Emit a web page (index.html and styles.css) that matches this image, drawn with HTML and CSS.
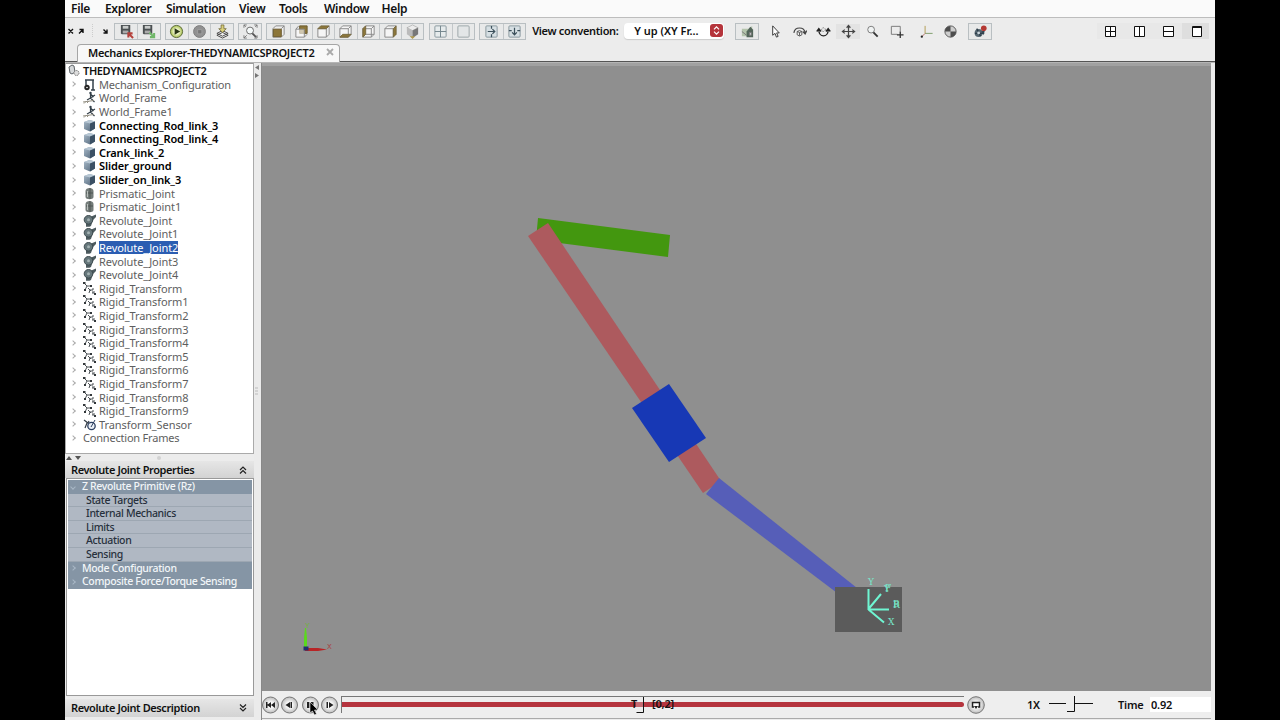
FILE: index.html
```html
<!DOCTYPE html>
<html lang="en">
<head>
  <meta charset="UTF-8" />
  <meta name="viewport" content="width=device-width, initial-scale=1" />
  <title>Mechanics Explorer-THEDYNAMICSPROJECT2</title>
  <link rel="stylesheet" href="styles.css">
</head>
<body>

<!-- Icon set -->
<svg class="sprite" width="0" height="0">
  <defs>
    <linearGradient id="steel" x2="1" y2="1"><stop stop-color="#a9bac9"/><stop offset="1" stop-color="#4b6074"/></linearGradient>
    <radialGradient id="knob"><stop offset=".3" stop-color="#fff"/><stop offset="1" stop-color="#bcbcbc"/></radialGradient>
    <radialGradient id="lime"><stop offset=".3" stop-color="#fbffe0"/><stop offset="1" stop-color="#a5bd4c"/></radialGradient>
  </defs>
  <symbol id="i-save" viewBox="0 0 16 16"><path d="M2 1h10v10H3L2 10z" fill="#4b5052"/><path d="M4 2h6v3H4z" fill="#c9cccb"/><path d="M4 7h6v3H4z" fill="#aaa"/><path d="M15 15l-5-5m0 4.500V10h4.500" stroke="#b5413c" stroke-width="2.200" fill="none"/></symbol>
  <symbol id="i-save2" viewBox="0 0 16 16"><path d="M2 1h10v10H3L2 10z" fill="#4b5052"/><path d="M4 2h6v3H4z" fill="#c9cccb"/><path d="M4 7h6v3H4z" fill="#aaa"/><path d="M9 9l5 5m0-4.500V14H9.500" stroke="#6fb768" stroke-width="2.200" fill="none"/></symbol>
  <symbol id="i-play" viewBox="0 0 16 16"><circle cx="8" cy="8" r="6.5" fill="url(#lime)" stroke="#59683a"/><path d="M6 4.5l6 3.5-6 3.5z" fill="#273414"/></symbol>
  <symbol id="i-stop" viewBox="0 0 16 16"><circle cx="8" cy="8" r="6.3" fill="#919191" stroke="#7d7d7d"/><path d="M6 6h4.500v4.500H6z" fill="#777" stroke="#aaa" stroke-width=".7"/></symbol>
  <symbol id="i-layers" viewBox="0 0 16 16"><path d="M2 12l6-3 6 3-6 3zM2 10l6-3 6 3-6 3z" fill="#eee" stroke="#444"/><path d="M6.500 1h3v4H12L8 9 4 5h2.500z" fill="#d9cf7b" stroke="#6d6531" stroke-width=".8"/></symbol>
  <symbol id="i-fit" viewBox="0 0 16 16"><path d="M1 4V1h3M12 1h3v3M1 12v3h3M15 12v3h-3M1 1l2 2M15 1l-2 2M1 15l3-3" stroke="#777" fill="none"/><circle cx="7.500" cy="7" r="3.700" fill="#f5fafa" stroke="#666"/><path d="M10 10l4 4" stroke="#555" stroke-width="2"/></symbol>
  <symbol id="i-front" viewBox="0 0 16 16"><path d="M2 5l3-3h9v9l-3 3H2zM11 5l3-3" fill="#eee" stroke="#888"/><path d="M2.500 5.500h8.500v8H2.500z" fill="#8c7639" stroke="#6b5a2c"/></symbol>
  <symbol id="i-back" viewBox="0 0 16 16"><path d="M6 2h8v8H6z" fill="#8c7639" stroke="#6b5a2c"/><path d="M2 5.500h9V14H2zM2 5.500L5 2M11 14l3-3" fill="#fff" fill-opacity=".6" stroke="#888"/></symbol>
  <symbol id="i-top" viewBox="0 0 16 16"><path d="M2 5h9v9H2zM11 14l3-3V2" fill="#f5f5f5" stroke="#888"/><path d="M2 5l3-3h9l-3 3z" fill="#8c7639" stroke="#75673f"/></symbol>
  <symbol id="i-bottom" viewBox="0 0 16 16"><path d="M2 5l3-3h9v9l-3 3H2zM2 5h9v9M11 5l3-3" fill="#f5f5f5" stroke="#888"/><path d="M2 14l3-3h9l-3 3z" fill="#8c7639" stroke="#75673f"/></symbol>
  <symbol id="i-left" viewBox="0 0 16 16"><path d="M5 2h9v9l-3 3H2V5zM2 5h9v9M11 5l3-3M5 11h9" fill="#f5f5f5" stroke="#888"/><path d="M2 5l3-3v9l-3 3z" fill="#8c7639" stroke="#75673f"/></symbol>
  <symbol id="i-right" viewBox="0 0 16 16"><path d="M2 5l3-3h9M2 5h9v9H2z" fill="#f5f5f5" stroke="#888"/><path d="M11 5l3-3v9l-3 3z" fill="#8c7639" stroke="#75673f"/></symbol>
  <symbol id="i-iso" viewBox="0 0 16 16"><path d="M8 1l6 3-6 3-6-3z" fill="#ececec" stroke="#999" stroke-width=".6"/><path d="M2 4l6 3v8l-6-4z" fill="#bbb"/><path d="M14 4L8 7v8l6-4z" fill="#787878"/><path d="M5 13l3 3 3-3z" fill="#b19a4c"/></symbol>
  <symbol id="i-four" viewBox="0 0 16 16"><rect x="2" y="2" width="12" height="12" rx="1" fill="#e6ebec" stroke="#87969d"/><path d="M8 2v12M2 8h12" stroke="#71838b"/></symbol>
  <symbol id="i-single" viewBox="0 0 16 16"><rect x="2" y="2" width="12" height="12" rx="1" fill="#e3e6e7" stroke="#9aa4a8"/></symbol>
  <symbol id="i-splitr" viewBox="0 0 16 16"><rect x="2" y="2" width="12" height="12" rx="1" fill="#d6dfe3" stroke="#87969d"/><path d="M8 2v3M8 11v3M4 8h7M9 5.500L11.500 8 9 10.500" stroke="#3c505b" stroke-width="1.300" fill="none"/></symbol>
  <symbol id="i-splitd" viewBox="0 0 16 16"><rect x="2" y="2" width="12" height="12" rx="1" fill="#d6dfe3" stroke="#87969d"/><path d="M2 7h3M11 7h3M8 4v7M5.500 9L8 11.500 10.500 9" stroke="#3c505b" stroke-width="1.300" fill="none"/></symbol>
  <symbol id="i-scene" viewBox="0 0 16 16"><path d="M2 5h7l4-3v11H2z" fill="#b4c4ac"/><path d="M7 8l4-5 3 3v8H7z" fill="#53665a"/><path d="M2 8l5 4M10 9h2v3h-2z" stroke="#777" fill="#d6dada"/></symbol>
  <symbol id="i-arrow" viewBox="0 0 16 16"><path d="M5 2v10l2.500-2 1.500 4 1.800-.8L9.200 9.500H12z" fill="#fff" stroke="#333"/></symbol>
  <symbol id="i-rotate" viewBox="0 0 16 16"><path d="M2 9.500C3 2.500 13 2.500 14 9.500M11.500 8l2.500 2.500L15.700 7" fill="none" stroke="#444" stroke-width="1.300"/><path d="M5.500 8L8 7l2.500 1v3.500L8 12.800l-2.500-1.300zM5.500 8L8 9l2.500-1M8 9v3.500" fill="none" stroke="#555"/></symbol>
  <symbol id="i-roll" viewBox="0 0 16 16"><path d="M3 6c0 9 10 9 10 0M.8 8L3 5l2.400 3M10.600 8L13 5l2.200 3" fill="none" stroke="#222" stroke-width="1.400"/><circle cx="8" cy="6" r="2" fill="none" stroke="#777" stroke-dasharray="1.500 1"/></symbol>
  <symbol id="i-pan" viewBox="0 0 16 16"><path d="M8 2v12M2 8h12M6 4l2-2.500L10 4M6 12l2 2.500 2-2.500M4 6L1.500 8 4 10M12 6l2.500 2-2.500 2" fill="none" stroke="#444" stroke-width="1.300"/></symbol>
  <symbol id="i-zoom" viewBox="0 0 16 16"><circle cx="6.500" cy="6" r="3.600" fill="#f0f3f3" stroke="#777"/><path d="M9 9l4.500 4.500" stroke="#333" stroke-width="2"/></symbol>
  <symbol id="i-region" viewBox="0 0 16 16"><path d="M9 11H2.500V2.500H12V8" fill="none" stroke="#777"/><path d="M12 8v7M8.500 11.500h7" stroke="#333" stroke-width="1.400"/></symbol>
  <symbol id="i-axes" viewBox="0 0 16 16"><path d="M6.500 2v8" stroke="#b09a50"/><path d="M6.500 10h8" stroke="#7b9c68"/><path d="M6.500 10L3 13.500" stroke="#b86b62"/><circle cx="3" cy="13.500" r="1.200" fill="#222"/></symbol>
  <symbol id="i-ball" viewBox="0 0 16 16"><circle cx="8" cy="8" r="6" fill="#cdcdcd" stroke="#555"/><path d="M8 8V2a6 6 0 0 0-6 6zM8 8v6a6 6 0 0 0 6-6z" fill="#4d4d4d"/></symbol>
  <symbol id="i-camera" viewBox="0 0 16 16"><circle cx="6" cy="9.500" r="4.300" fill="#54656f"/><path d="M2 10h10M4 5l4 8" stroke="#2d3d49" stroke-width="1.500"/><circle cx="6" cy="9.500" r="1.500" fill="#cdd7dd"/><path d="M9 8l4-2-2 6z" fill="#344552"/><circle cx="11.500" cy="4.500" r="3" fill="#b43832"/></symbol>

  <symbol id="t-root" viewBox="0 0 13 13"><path d="M2 3l3-2 2 1 1 6-3 2-2-1z" fill="#d5d8da" stroke="#5e6367"/><circle cx="9.500" cy="9" r="2.500" fill="#ddd" stroke="#777" stroke-dasharray="1.500 .7"/></symbol>
  <symbol id="t-config" viewBox="0 0 13 13"><path d="M3 7V2h7v6M2 2h9M8 12h4M10 7v5" stroke="#35414b" stroke-width="1.500" fill="none"/><circle cx="4" cy="9.500" r="2.700" fill="#222"/><circle cx="4" cy="9.500" r=".8" fill="#fff"/></symbol>
  <symbol id="t-world" viewBox="0 0 13 13"><path d="M7.500 1v6L12 4M7.500 7l4 4M7.500 7L4 9M7.500 3l3 3" stroke="#34404a" stroke-width="1.200" fill="none"/><path d="M0 11l11-1.500M1 12.500l2-2M4 12l2-2" stroke="#938f82"/><circle cx="7.500" cy="2" r="1.200" fill="#34404a"/></symbol>
  <symbol id="t-body" viewBox="0 0 13 13"><path d="M1 3l5.500-2L12 2.500v7L7 12.500 1 10z" fill="url(#steel)"/><path d="M1 3l6 1.500 5-2L6.500 1z" fill="#b7c7d4"/><path d="M7 4.500l5-2v7l-5 3z" fill="#3b5064"/></symbol>
  <symbol id="t-prismatic" viewBox="0 0 13 13"><path d="M2.500 4c0-4 8-4 8 0v6c0 3-8 3-8 0z" fill="#737b79"/><path d="M7 1v11M3 6h7" stroke="#4e5755"/><path d="M4.500 4v6" stroke="#b9bfbc"/></symbol>
  <symbol id="t-revolute" viewBox="0 0 13 13"><path d="M7 3l6-2.500V3l-3 3-2 6-1.500.8H3V9z" fill="#4d5b5f"/><circle cx="5.500" cy="5.800" r="4.300" fill="#66777b" stroke="#3c4a4e"/><circle cx="5.500" cy="5.800" r="1.500" fill="#a3b2b3"/></symbol>
  <symbol id="t-rigid" viewBox="0 0 13 13"><path d="M1 1l3 3h4M4 4l-2 4M7 8h3V6M7 8l-1 3M9 10h3M5 6l3 3M10 10v2" stroke="#4a5054" fill="none"/><path d="M0 0h2.500v2H0zM7 3h2v2H7zM1 7h2v2H1zM11 11h2v2h-2z" fill="#33383b"/></symbol>
  <symbol id="t-sensor" viewBox="0 0 13 13"><path d="M1 2l4 3 1-2M4 5l-2 5" stroke="#333d48" stroke-width="1.200" fill="none"/><circle cx="8.500" cy="8" r="3.700" fill="#e9eef5" stroke="#2c3f60" stroke-width="1.300"/><path d="M8 9l4-7" stroke="#2c3f60"/></symbol>
</svg>

<div class="window">
  <nav class="menubar">
    <span class="m-file">File</span>
    <span class="m-explorer">Explorer</span>
    <span class="m-simulation">Simulation</span>
    <span class="m-view">View</span>
    <span class="m-tools">Tools</span>
    <span class="m-window">Window</span>
    <span>Help</span>
  </nav>

  <div class="toolbar">
    <svg class="dock" viewBox="0 0 49 16"><path d="M3.500 6l4.500 4.500m0-4.500l-4.500 4.500M14 10.500l4-4m-3.500 0H18V10M38.500 6.500l3.500 3.500m0-3.500V10h-3.500" fill="none" stroke="#111" stroke-width="1.400"/><path d="M27.500 1v14" stroke="#ccc" stroke-dasharray="1 1"/></svg>
    <div class="group" data-icons="save save2"></div>
    <div class="group" data-icons="play stop layers"></div>
    <div class="group" data-icons="fit"></div>
    <div class="group" data-icons="front back top bottom left right iso"></div>
    <div class="group" data-icons="four single"></div>
    <div class="group" data-icons="splitr splitd"></div>
    <label class="convention">View convention:</label>
    <div class="combo"><span>Y up (XY Fr...</span>
      <svg viewBox="0 0 13 13"><rect width="13" height="13" rx="3" fill="#b5343b"/><path d="M4 5.300l2.500-2.500L9 5.300M4 7.700l2.500 2.500L9 7.700" fill="none" stroke="#fff" stroke-width="1.200"/></svg>
    </div>
    <div class="group scene-btn" data-icons="scene"></div>
    <div class="tools" data-icons="arrow rotate roll pan zoom region"></div>
    <div class="tools tools-axes" data-icons="axes ball"></div>
    <div class="group camera-btn" data-icons="camera"></div>
    <svg class="layouts" viewBox="0 0 112 16" fill="#fff" stroke="#111">
      <rect width="112" height="16" fill="#e8e8e8" stroke="none"/><rect x="85" width="27" height="16" fill="#dedede" stroke="none"/>
      <path d="M8.500 3.500h10v10h-10zM13.500 3.500v10M8.500 8.500h10M37.500 3.500h10v10h-10zM42.500 3.500v10M66.500 3.500h10v10h-10zM66.500 8.500h10M95.500 3.500h9v10h-9zM95 4.500h10"/>
    </svg>
  </div>

  <div class="tabs">
    <div class="tab"><span>Mechanics Explorer-THEDYNAMICSPROJECT2</span>
      <svg viewBox="0 0 8 8"><path d="M1 1l6 6M7 1L1 7" stroke="#aaa" stroke-width="1.800"/></svg>
    </div>
  </div>

  <div class="content">
    <aside class="sidebar">
      <ul class="tree" id="tree"></ul>
      <div class="splitter"><svg viewBox="0 0 100 8"><path d="M1 6l3-4 3 4zM10 2h6l-3 4z" fill="#555"/><circle cx="94" cy="4" r="2" fill="#d2d2d2"/></svg></div>
      <div class="panel-head"><span>Revolute Joint Properties</span><svg viewBox="0 0 8 8"><path d="M1 4l3-3 3 3M1 7.500l3-3 3 3" fill="none" stroke="#222" stroke-width="1.200"/></svg></div>
      <div class="props">
        <div class="prop-group"><i class="open"></i>Z Revolute Primitive (Rz)</div>
        <div class="prop">State Targets</div>
        <div class="prop">Internal Mechanics</div>
        <div class="prop">Limits</div>
        <div class="prop">Actuation</div>
        <div class="prop">Sensing</div>
        <div class="prop-group"><i></i>Mode Configuration</div>
        <div class="prop-group"><i></i>Composite Force/Torque Sensing</div>
      </div>
      <div class="panel-head description"><span>Revolute Joint Description</span><svg viewBox="0 0 8 8"><path d="M1 .5l3 3 3-3M1 4l3 3 3-3" fill="none" stroke="#222" stroke-width="1.200"/></svg></div>
    </aside>

    <div class="divider"><svg viewBox="0 0 8 655"><path d="M5 2v5L1 4.500zM1 10v5l4-2.500z" fill="#777"/><path d="M1 325h3M1 328h3M1 331h3" stroke="#bbb"/></svg></div>

    <main class="viewer">
      <svg class="canvas" viewBox="262 66 949 625">
        <!-- linkage -->
        <path d="M538 218l132 17-2 22-132-17z" fill="#43970f"/>
        <path d="M528 236l20-13 173 258-18 12z" fill="#ad5a5e"/>
        <path d="M632 408l37-24 37 54-37 24z" fill="#1738b5"/>
        <path d="M719 478l138 110v20l-151-114z" fill="#565eb8"/>
        <path d="M835 587h67v45h-67z" fill="#5b5b5b"/>
        <!-- frame axes -->
        <path d="M868.500 589v21M868.500 609l12.500-15M868.500 609.500h20.500M868.500 609.500l15.500 13" stroke="#6ff5d2" stroke-width="2"/>
        <g class="axis-text"><text x="868" y="585">Y</text><text x="885" y="591">F</text><text x="884" y="592">Y</text><text x="893" y="607">B</text><text x="893" y="608">R</text><text x="888" y="625">X</text></g>
        <!-- orientation triad -->
        <path d="M304 650v-12l1-10h1l1 10v12z" fill="#5ad91c"/><path d="M305 648h13l9 1.500-9 1.500h-13z" fill="#b82426"/><path d="M303.500 646.500h5v4h-5z" fill="#22306e"/>
        <g class="triad-text"><text x="305" y="628" fill="#70b13f">Y</text><text x="327" y="649" fill="#a64848">X</text></g>
      </svg>
      <div class="playback">
        <svg class="transport" viewBox="0 0 79 20">
          <g fill="url(#knob)" stroke="#777"><circle cx="8.500" cy="10" r="8"/><circle cx="27.500" cy="10" r="8"/><circle cx="48.500" cy="10" r="8"/><circle cx="67.500" cy="10" r="8"/></g>
          <path d="M4 7h1.500v6H4zM9 7v6l-4-3zM13 7v6l-4-3zM28 7v6l-4.500-3zM28.500 7H30v6h-1.500zM45 7h2.500v6H45zM49 7h2.500v6H49zM64.500 7H66v6h-1.500zM67 7l4.500 3-4.500 3z" fill="#222"/>
          <path d="M48 7v11l2.500-2 2 4 2-1-2-4H56z" fill="#000" stroke="#eee" stroke-width=".6"/>
        </svg>
        <div class="timeline"><div class="track"></div>
          <svg class="thumb" viewBox="0 0 9 17"><path d="M0 0h7v15H0z" fill="#eee" fill-opacity=".3"/><path d="M7.500 0v15.500H.5" fill="none" stroke="#111"/></svg>
          <span class="range-t">T</span><span class="range">[0,2]</span>
        </div>
        <svg class="loop" viewBox="0 0 20 20"><circle cx="10" cy="10" r="8.300" fill="url(#knob)" stroke="#777"/><path d="M8 12H6.500V7.500h7V12H12" fill="none" stroke="#222" stroke-width="1.500"/><path d="M8 11h4l-2 3z" fill="#222"/></svg>
        <span class="speed">1X</span>
        <svg class="speed-slider" viewBox="0 0 44 17"><path d="M0 7.500h17M26 7.500h18M25.500 0v15.500H18" fill="none" stroke="#111"/></svg>
        <span class="time-label">Time</span><span class="time-value">0.92</span>
      </div>
    </main>
  </div>
</div>

<script>
  const nodes = [
    ['Mechanism_Configuration', 'config'],
    ['World_Frame', 'world'],
    ['World_Frame1', 'world'],
    ['Connecting_Rod_link_3', 'body'],
    ['Connecting_Rod_link_4', 'body'],
    ['Crank_link_2', 'body'],
    ['Slider_ground', 'body'],
    ['Slider_on_link_3', 'body'],
    ['Prismatic_Joint', 'prismatic'],
    ['Prismatic_Joint1', 'prismatic'],
    ['Revolute_Joint', 'revolute'],
    ['Revolute_Joint1', 'revolute'],
    ['Revolute_Joint2', 'revolute', 'selected'],
    ['Revolute_Joint3', 'revolute'],
    ['Revolute_Joint4', 'revolute'],
    ['Rigid_Transform', 'rigid']
  ];
  for (let i = 1; i <= 9; i++) nodes.push(['Rigid_Transform' + i, 'rigid']);
  nodes.push(['Transform_Sensor', 'sensor']);

  const icon = (id) => `<svg><use href="#${id}"/></svg>`;

  // Model tree
  document.getElementById('tree').innerHTML =
    `<li class="root">${icon('t-root')}<span>THEDYNAMICSPROJECT2</span></li>` +
    nodes.map(([name, type, state]) =>
      `<li class="${type} ${state || ''}"><i></i>${icon('t-' + type)}<span>${name}</span></li>`
    ).join('') +
    '<li class="frames"><i></i><span>Connection Frames</span></li>';

  // Toolbar buttons
  document.querySelectorAll('[data-icons]').forEach(group => {
    group.innerHTML = group.dataset.icons.split(' ')
      .map(name => `<button class="b-${name}">${icon('i-' + name)}</button>`).join('');
  });
</script>

</body>
</html>
```
FILE: styles.css
```css
* {
  box-sizing: border-box;
}

body {
  margin: 0;
  height: 100vh;
  overflow: hidden;
  background: #000;
  color: #111;
  font-family: "Noto Sans", "Open Sans", sans-serif;
  font-size: 11px;
}

svg {
  display: block;
  flex: none;
}

.sprite {
  position: absolute;
}

.window {
  width: 1150px;
  height: 720px;
  margin-left: 65px;
  background: #ececec;
  display: flex;
  flex-direction: column;
}

/* Menu */
.menubar {
  height: 18px;
  flex: none;
  display: flex;
  padding-left: 6px;
  background: #fafafa;
  border-bottom: 1px solid #bdbdbd;
  font-size: 12px;
  font-weight: 600;
  line-height: 17px;
  letter-spacing: -0.33px;
}

.m-file { width: 34px; }
.m-explorer { width: 61px; }
.m-simulation { width: 73px; }
.m-view { width: 40px; }
.m-tools { width: 45px; }
.m-window { width: 57.5px; }

/* Toolbar */
.toolbar {
  height: 26px;
  flex: none;
  display: flex;
  align-items: center;
}

.dock {
  width: 49px;
  height: 16px;
}

.group {
  display: flex;
  flex: none;
  height: 17px;
  margin-right: 4.2px;
  border: 1px solid #b9bfc2;
}

button {
  flex: none;
  width: 22.3px;
  height: 15px;
  padding: 0;
  border: 0;
  background: #e8e9e9;
  display: flex;
  align-items: center;
  justify-content: center;
}

button + button {
  border-left: 1px solid #c3c7c9;
}

button svg {
  width: 15px;
  height: 15px;
}

.convention {
  flex: none;
  width: 92px;
  padding: 0 0 2px 2px;
  font-weight: 600;
  letter-spacing: -0.32px;
  white-space: nowrap;
}

.combo {
  flex: none;
  width: 100px;
  height: 16px;
  display: flex;
  align-items: center;
  justify-content: space-between;
  margin-left: 2px;
  padding: 0 1px 1px 10px;
  background: #fff;
  border-radius: 4px;
  box-shadow: 0 1px 1px #ccc;
  font-weight: 600;
  letter-spacing: 0;
}

.combo svg {
  width: 13px;
  height: 13px;
}

.scene-btn {
  margin-left: 11px;
  margin-right: 4px;
}

.tools {
  display: flex;
}

.tools button {
  width: 24.2px;
  border: 0;
  background: none;
}

.tools-axes {
  margin-left: 5.5px;
}

.tools .b-pan {
  background: #e3e3e3;
}

.camera-btn {
  margin-left: 5.5px;
}

.layouts {
  width: 112px;
  height: 16px;
  margin-left: auto;
  margin-right: 6px;
}

/* Document tabs */
.tabs {
  height: 18px;
  flex: none;
  padding-left: 12px;
  border-bottom: 1px solid #555;
}

.tab {
  width: 263px;
  height: 18px;
  display: flex;
  align-items: center;
  justify-content: space-between;
  padding: 0 5px 3px 10px;
  background: #f8f8f8;
  border: 1px solid #a5a5a5;
  border-bottom: 0;
  border-radius: 4px 4px 0 0;
  font-weight: 600;
  letter-spacing: -0.3px;
  white-space: nowrap;
}

.tab svg {
  width: 8px;
  height: 8px;
}

/* Content */
.content {
  flex: 1;
  min-height: 0;
  display: flex;
  border-top: 1px solid #b5b5b5;
}

.sidebar {
  width: 189px;
  display: flex;
  flex-direction: column;
}

.tree {
  height: 391px;
  flex: none;
  margin: 0;
  padding: 0 0 0 5px;
  list-style: none;
  background: #fff;
  border: 1px solid #aaa;
  border-top-color: #999;
  color: #5e5e5e;
  letter-spacing: -0.07px;
}

.tree li {
  height: 13.6px;
  display: flex;
  align-items: center;
  line-height: 13px;
  white-space: nowrap;
}

.tree svg {
  width: 13px;
  height: 13px;
  margin-right: 3px;
}

.tree i {
  width: 4px;
  height: 4px;
  margin: 0 8px 0 0;
  border: solid #aaa;
  border-width: 1px 1px 0 0;
  transform: rotate(45deg);
}

.tree .root {
  margin-left: -4px;
  color: #111;
  font-weight: 600;
  letter-spacing: -0.37px;
}

.tree .config {
  letter-spacing: -0.17px;
}

.tree .body {
  color: #000;
  font-weight: 600;
  letter-spacing: -0.13px;
}

.tree .frames {
  letter-spacing: -0.2px;
}

.selected span {
  background: #2b5db2;
  color: #fff;
}

.splitter {
  height: 7px;
  flex: none;
}

.splitter svg {
  width: 100px;
  height: 8px;
}

.panel-head {
  height: 17px;
  flex: none;
  display: flex;
  align-items: center;
  justify-content: space-between;
  padding: 0 7px 0 6px;
  background: linear-gradient(#e6e6e6, #d3d3d3);
  font-weight: 600;
  letter-spacing: -0.4px;
}

.panel-head svg {
  width: 8px;
  height: 8px;
}

.props {
  height: 218px;
  flex: none;
  margin: 0 0 3px 1px;
  padding: 1px;
  background: #fff;
  border: 1px solid #999;
  font-size: 10.5px;
  font-weight: 500;
  letter-spacing: -0.34px;
}

.prop,
.prop-group {
  height: 13.6px;
  line-height: 13px;
  white-space: nowrap;
}

.prop {
  padding-left: 18px;
  background: #b0b8c3;
  border-bottom: 1px solid #9da7b2;
  color: #27303c;
}

.prop-group {
  display: flex;
  align-items: center;
  background: #8595a5;
  color: #f2f5f8;
}

.prop-group i {
  flex: none;
  width: 4px;
  height: 4px;
  margin: 0 7px 0 3px;
  border: solid #a9b8c6;
  border-width: 1px 1px 0 0;
  transform: rotate(45deg);
}

.prop-group .open {
  transform: rotate(135deg);
}

.description {
  height: 18px;
  padding-bottom: 1px;
}

.divider {
  width: 8px;
  background: #ebebeb;
  border-right: 1px solid #888;
}

.divider svg {
  width: 8px;
  height: 655px;
}

/* 3D view */
.viewer {
  width: 949px;
  display: flex;
  flex-direction: column;
}

.canvas {
  width: 949px;
  height: 628px;
  border-top: 3px solid #a1a1a1;
  background: #8f8f8f;
}

.axis-text {
  fill: #78e6cb;
  font: 9px "DejaVu Serif", serif;
}

.triad-text {
  font: 8px "Liberation Mono", monospace;
}

/* Playback bar */
.playback {
  height: 28px;
  display: flex;
  align-items: center;
  background: #eee;
  border-bottom: 1px solid #aaa;
  font-weight: 600;
  letter-spacing: -0.2px;
}

.transport {
  width: 79px;
  height: 20px;
}

.timeline {
  position: relative;
  width: 623px;
  height: 17px;
  border: 1px solid #777;
  border-width: 1px 0 0 1px;
  padding-top: 5px;
}

.track {
  height: 5px;
  background: #b5343e;
  border-radius: 0 3px 3px 0;
}

.thumb {
  position: absolute;
  left: 294px;
  top: 0;
  width: 9px;
  height: 17px;
}

.range-t,
.range {
  position: absolute;
  top: -1px;
  line-height: 15px;
}

.range-t { left: 289px; }
.range { left: 310px; }

.loop {
  width: 20px;
  height: 20px;
  margin-left: 2px;
}

.speed {
  width: 22px;
  margin-left: 41px;
}

.speed-slider {
  width: 44px;
  height: 17px;
}

.time-label {
  margin-left: 25px;
  width: 32px;
}

.time-value {
  width: 61px;
  height: 15px;
  line-height: 15px;
  padding-left: 1px;
  background: #fff;
}
```
